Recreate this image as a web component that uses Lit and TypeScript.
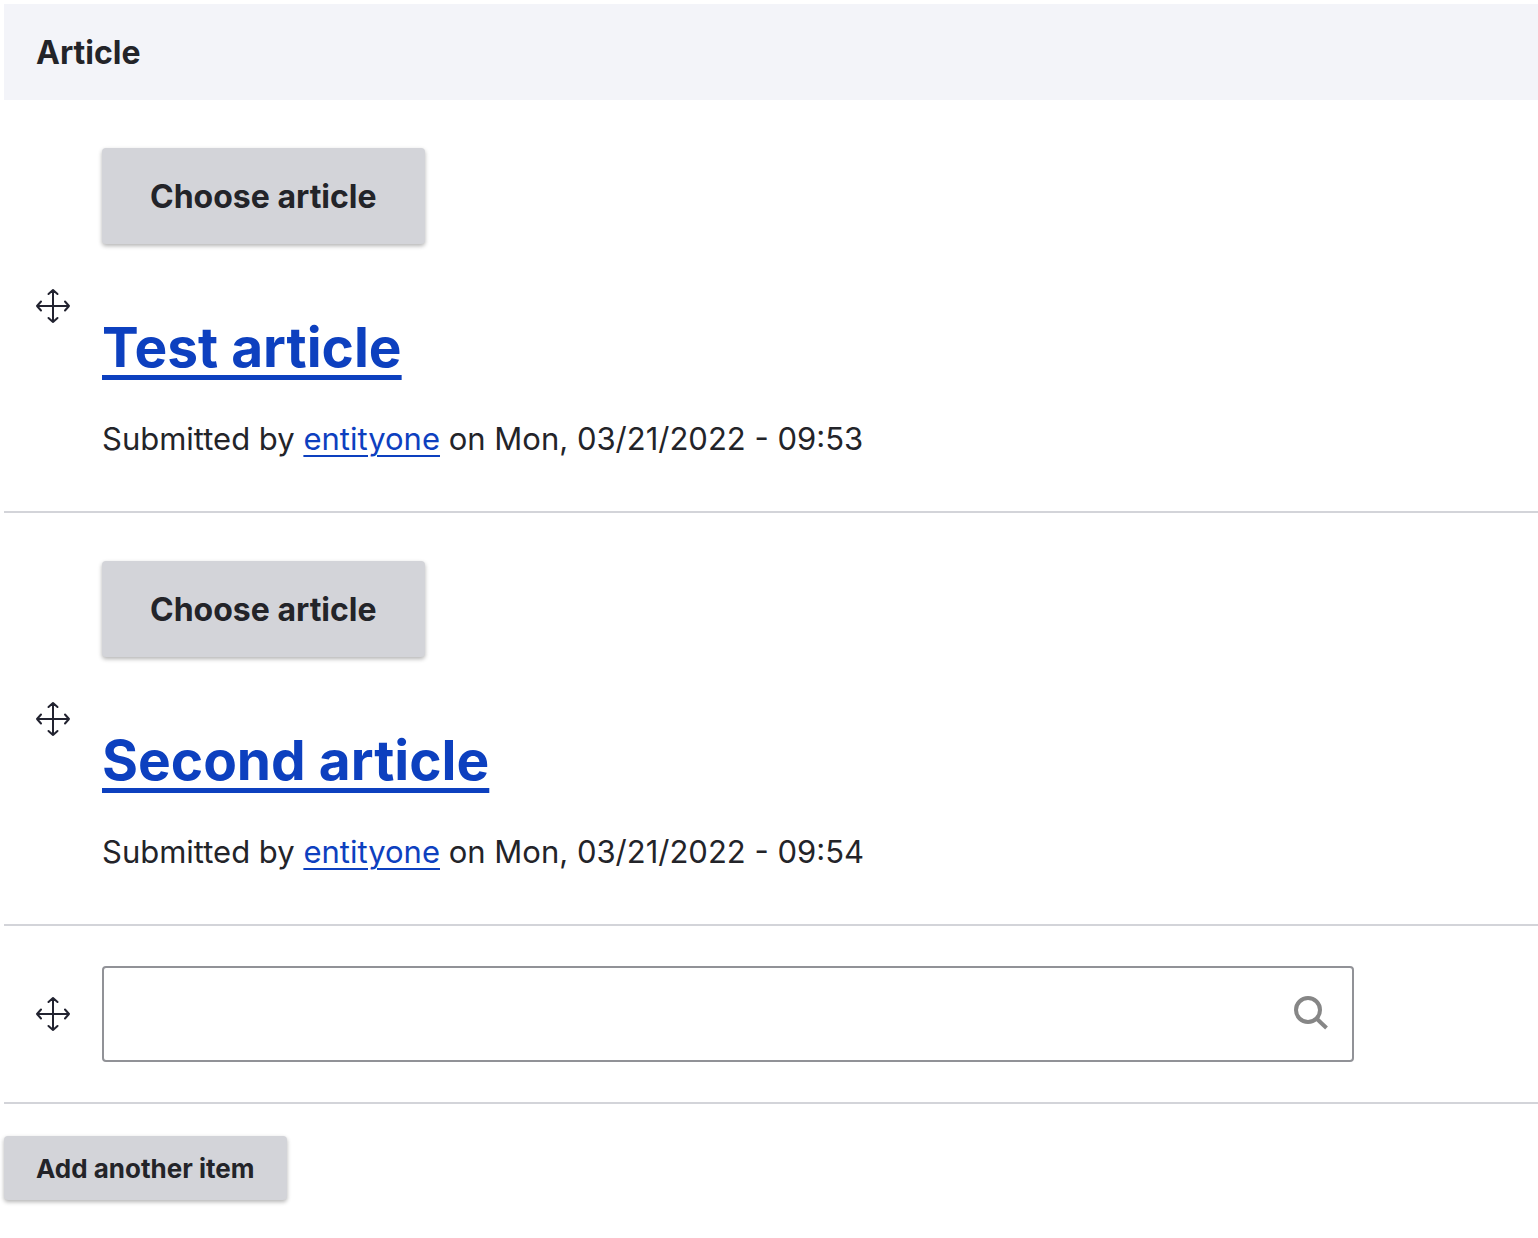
import { LitElement, html, css } from "lit";
import { customElement, state } from "lit/decorators.js";

interface Article {
  title: string;
  author: string;
  date: string;
}

const handleIcon = html`<svg class="move" viewBox="0 0 34 34" aria-hidden="true">
  <path d="M17 1V33M1 17H33M12.5 5L17 1l4.5 4M12.5 29l4.5 4 4.5-4M5 12.5L1 17l4 4.5M29 12.5l4 4.5-4 4.5" />
</svg>`;

@customElement("app-root")
export class AppRoot extends LitElement {
  @state() private articles: Article[] = [
    { title: "Test article", author: "entityone", date: "Mon, 03/21/2022 - 09:53" },
    { title: "Second article", author: "entityone", date: "Mon, 03/21/2022 - 09:54" },
  ];

  static styles = css`
    :host {
      display: block;
      padding: 4px 0 36px 4px;
      background: #fff;
      color: #232429;
      font-family: Inter, "Liberation Sans", sans-serif;
      font-size: 31px;
      line-height: 48px;
    }
    table {
      width: 100%;
      border-spacing: 0;
    }
    th {
      height: 94px;
      padding: 2px 32px 0;
      background: #f3f4f9;
      font-size: 32px;
      font-weight: 700;
      text-align: left;
    }
    td {
      padding: 48px 32px 48px 0;
      border-bottom: 2px solid #d3d4d9;
    }
    td.grip {
      width: 34px;
      padding: 0 32px;
      vertical-align: middle;
    }
    td.entry {
      padding: 40px 184px 40px 0;
    }
    button {
      display: block;
      border: 0;
      border-radius: 4px;
      background: #d3d4d9;
      color: #232429;
      font: inherit;
      font-weight: 700;
      box-shadow: 0 2px 4px rgba(0, 0, 0, 0.3);
      cursor: pointer;
    }
    .choose {
      height: 96px;
      padding: 2px 48px 0;
      font-size: 32px;
    }
    .add {
      height: 64px;
      margin-top: 32px;
      padding: 2px 32px 0;
      font-size: 26px;
    }
    .handle {
      display: block;
      width: 34px;
      height: 34px;
      padding: 0;
      background: none;
      box-shadow: none;
      cursor: move;
    }
    .move {
      display: block;
      width: 34px;
      height: 34px;
      overflow: visible;
      fill: none;
      stroke: #222330;
      stroke-width: 2;
      stroke-linecap: round;
      stroke-linejoin: round;
    }
    a {
      color: #0d40bf;
      text-decoration: underline;
      text-decoration-thickness: 2px;
      text-underline-offset: 5px;
    }
    h2 {
      margin: 67px 0 32px;
      font-size: 55px;
      line-height: 72px;
      font-weight: 700;
    }
    h2 a {
      text-decoration-thickness: 5px;
      text-underline-offset: 8px;
    }
    p {
      margin: 0;
    }
    .field {
      display: flex;
      align-items: center;
      height: 92px;
      padding-right: 24px;
      border: 2px solid #919297;
      border-radius: 4px;
    }
    .field input {
      flex: 1;
      min-width: 0;
      height: 100%;
      padding: 0 30px;
      border: 0;
      outline: 0;
      background: none;
      font: inherit;
    }
    .search {
      width: 36px;
      height: 36px;
      fill: none;
      stroke: #868686;
      stroke-width: 4;
    }
  `;

  private renderHandle() {
    return html`<td class="grip">
      <button class="handle" type="button" aria-label="Drag to re-order">${handleIcon}</button>
    </td>`;
  }

  render() {
    return html`
      <table>
        <thead>
          <tr><th colspan="2" scope="col">Article</th></tr>
        </thead>
        <tbody>
          ${this.articles.map(
            (a) => html`<tr>
              ${this.renderHandle()}
              <td>
                <button class="choose" type="button">Choose article</button>
                <h2><a href="#">${a.title}</a></h2>
                <p>Submitted by <a href="#">${a.author}</a> on ${a.date}</p>
              </td>
            </tr>`,
          )}
          <tr>
            ${this.renderHandle()}
            <td class="entry">
              <div class="field">
                <input type="text" aria-label="Article" />
                <svg class="search" viewBox="0 0 36 36" aria-hidden="true">
                  <circle cx="16" cy="14" r="12" />
                  <path d="M24.5 22.5L34.5 32" />
                </svg>
              </div>
            </td>
          </tr>
        </tbody>
      </table>
      <button class="add" type="button">Add another item</button>
    `;
  }
}
